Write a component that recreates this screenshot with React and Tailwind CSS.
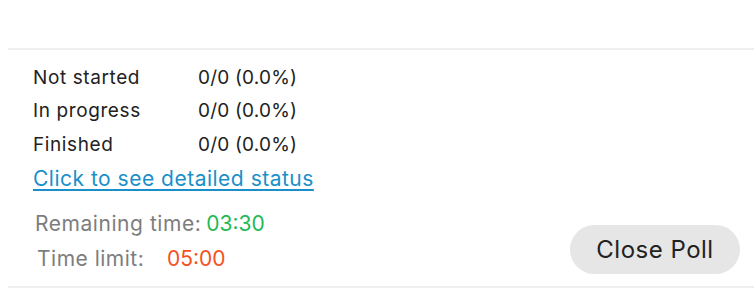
export default function App() {
  const rows = [
    ["Not started", "0/0 (0.0%)"],
    ["In progress", "0/0 (0.0%)"],
    ["Finished", "0/0 (0.0%)"],
  ];
  return (
    <div className="w-[754px] h-[296px] bg-white overflow-hidden" style={{ fontFamily: "Inter, 'Noto Sans', sans-serif" }}>
      <div className="h-[48px]" />
      <div className="ml-[8px] h-[2px] bg-[#efefef]" />
      <div className="pl-[33px] pt-[11px]">
        {rows.map(([a, b]) => (
          <div key={a} className="flex h-[33.5px] items-center text-[19px] text-[#222]">
            <span className="w-[165px] tracking-[0.6px]">{a}</span>
            <span className="tracking-[0.2px]">{b}</span>
          </div>
        ))}
        <div className="flex h-[33.5px] items-center">
          <a className="text-[21px] tracking-[0.5px] text-[#1a8fc9] underline decoration-[2px] underline-offset-[3px]">Click to see detailed status</a>
        </div>
      </div>
      <div className="flex items-end justify-between pr-[14px]">
        <div className="pl-[35px] pt-[11px] text-[21px]">
          <div className="flex h-[35px] items-center">
            <span className="tracking-[0.55px] text-[#7d7d7d]">Remaining time:</span>
            <span className="ml-[5px] text-[#1fba55]">03:30</span>
          </div>
          <div className="flex h-[35px] items-center pl-[2px]">
            <span className="w-[130px] tracking-[0.5px] text-[#7d7d7d]">Time limit:</span>
            <span className="text-[#f4511e]">05:00</span>
          </div>
        </div>
        <button className="h-[49px] w-[170px] rounded-full bg-[#e6e6e6] text-[24px] tracking-[0.5px] text-[#222] mb-[2px]">Close Poll</button>
      </div>
      <div className="ml-[8px] mt-[10px] h-[2px] bg-[#efefef]" />
    </div>
  );
}
